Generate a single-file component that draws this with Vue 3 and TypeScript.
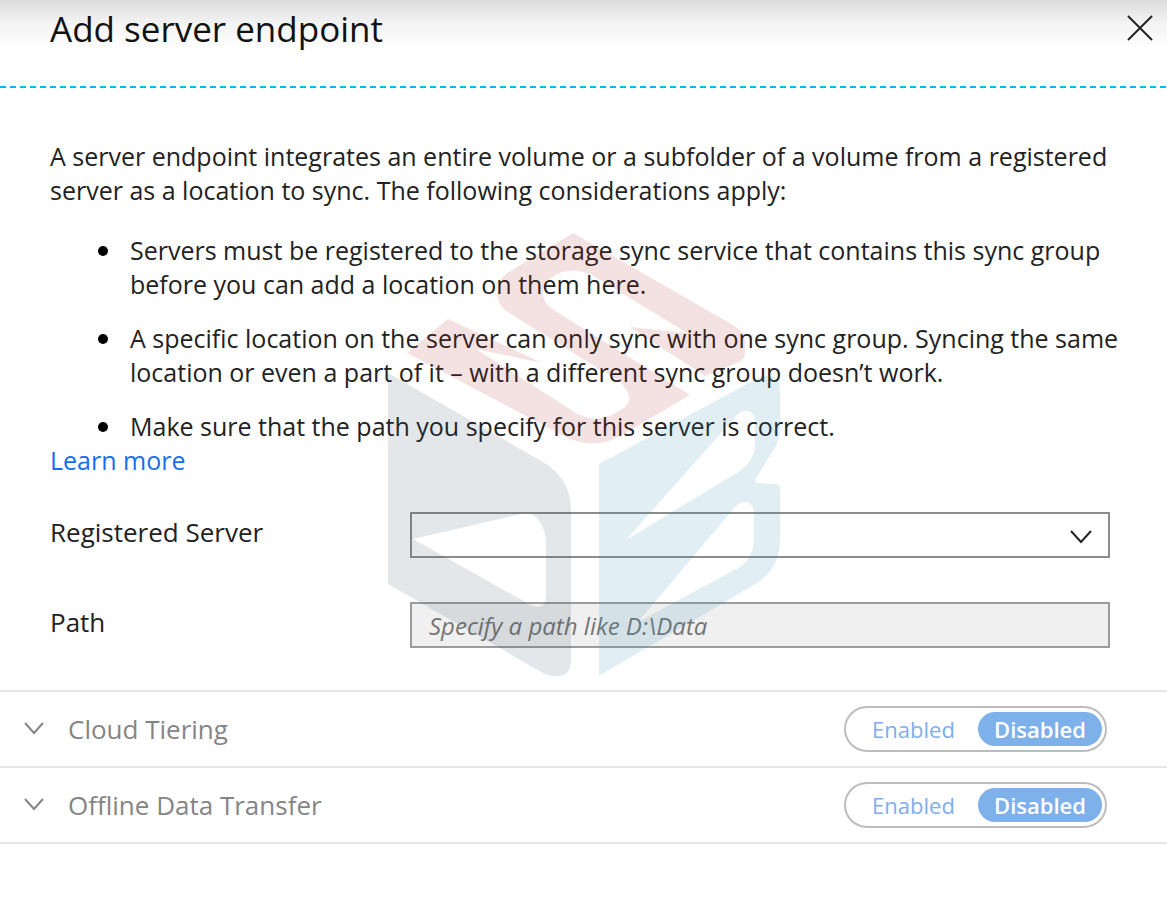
<script setup lang="ts">
import { ref } from 'vue'

const considerations: string[] = [
  'Servers must be registered to the storage sync service that contains this sync group before you can add a location on them here.',
  'A specific location on the server can only sync with one sync group. Syncing the same location or even a part of it – with a different sync group doesn’t work.',
  'Make sure that the path you specify for this server is correct.',
]

const server = ref('')
const path = ref('')
const sections = ref([
  { id: 'tiering', title: 'Cloud Tiering', value: 'Disabled' },
  { id: 'offline', title: 'Offline Data Transfer', value: 'Disabled' },
])
</script>

<template>
  <main class="blade">
    <header class="head">
      <h1>Add server endpoint</h1>
      <button class="close" type="button" aria-label="Close">
        <svg width="26" height="26" viewBox="0 0 26 26" aria-hidden="true">
          <path d="M1 1L25 25M25 1L1 25" />
        </svg>
      </button>
    </header>
    <svg class="divider" width="100%" height="2" aria-hidden="true">
      <line x1="0" y1="1" x2="100%" y2="1" />
    </svg>

    <section class="body">
      <p>
        A server endpoint integrates an entire volume or a subfolder of a volume from a registered
        server as a location to sync. The following considerations apply:
      </p>
      <ul>
        <li v-for="item in considerations" :key="item">{{ item }}</li>
      </ul>
      <a class="learn" href="#">Learn more</a>

      <div class="field">
        <label for="server">Registered Server</label>
        <div class="select">
          <select id="server" v-model="server">
            <option value=""></option>
          </select>
          <svg class="arrow" width="24" height="14" viewBox="0 0 24 14" aria-hidden="true">
            <path d="M2 1L12 12L22 1" />
          </svg>
        </div>
      </div>
      <div class="field">
        <label for="path">Path</label>
        <input id="path" v-model="path" class="path" type="text" placeholder="Specify a path like D:\Data" />
      </div>
    </section>

    <section v-for="s in sections" :key="s.id" class="row">
      <button class="expand" type="button">
        <svg width="22" height="14" viewBox="0 0 22 14" aria-hidden="true">
          <path d="M2 1L11 11L20 1" />
        </svg>
        <span>{{ s.title }}</span>
      </button>
      <div class="toggle" role="radiogroup" :aria-label="s.title">
        <label v-for="o in ['Enabled', 'Disabled']" :key="o" :class="{ on: s.value === o }">
          <input v-model="s.value" type="radio" :name="s.id" :value="o" />{{ o }}
        </label>
      </div>
    </section>

    <svg class="mark" width="394" height="446" viewBox="387 232 394 446" aria-hidden="true">
      <path
        fill="#b22828"
        d="M573 233L733 325Q745 332 745 343V352Q745 359 739 362L705 376L630 327L687 333L597 278Q580 267 562 272Q538 282 544 299Q546 304 552 309L690 395L622 435Q593 452 562 435L407 353L448 319L542 363L476 349L568 408Q590 424 610 416L622 409Q634 402 626 389L620 382L506 311Q497 304 497 292Q498 280 507 273Z"
      />
      <path
        fill="#2f4e5d"
        fill-rule="evenodd"
        d="M388 373L543 462Q571 479 571 510V660Q571 676 557 676Q549 676 543 673L388 584ZM413 539L525 513Q532 512 538 519Q546 529 546 544V596Q546 607 537 607Q532 606 527 603Z"
      />
      <path
        fill="#208cb2"
        fill-rule="evenodd"
        d="M599 464L758 378Q780 370 780 391V428Q780 440 774 449L755 480Q755 483 759 483L776 484Q780 484 780 488V540Q780 568 757 583L599 676ZM626 540L737 415Q742 410 748 411Q755 413 755 421V445Q754 462 738 472ZM638 622L735 507Q740 502 746 502Q754 504 754 513V540Q753 558 740 567Z"
      />
    </svg>
  </main>
</template>

<style>
body {
  margin: 0;
  background: #fff;
}
</style>

<style scoped>
.blade {
  position: relative;
  font-family: 'Open Sans', 'Noto Sans', sans-serif;
  font-size: 25px;
  line-height: 34px;
  color: #222;
}
.head {
  display: flex;
  justify-content: space-between;
  box-sizing: border-box;
  height: 86px;
  padding: 7px 14px 0 50px;
  background: linear-gradient(#dcdcdc, #f4f4f4 24px, #fff 50px);
}
h1 {
  margin: 0;
  font-size: 35px;
  line-height: 44px;
  font-weight: 400;
  color: #111;
}
button {
  border: 0;
  padding: 0;
  background: none;
  font: inherit;
}
.close {
  display: flex;
  align-items: center;
  height: 42px;
}
.close path,
.arrow path,
.expand path {
  fill: none;
  stroke: #222;
  stroke-width: 2;
}
.divider {
  display: block;
}
.divider line {
  stroke: #00bbf0;
  stroke-width: 2;
  stroke-dasharray: 6 4;
}
.body {
  padding: 51px 57px 42px 50px;
}
p {
  margin: 0 0 26px;
}
ul {
  margin: 0 -16px 0 0;
  padding-left: 80px;
  list-style: none;
}
li {
  position: relative;
}
li::before {
  content: '';
  position: absolute;
  left: -32px;
  top: 13px;
  width: 10px;
  height: 10px;
  border-radius: 50%;
  background: #000;
}
li + li {
  margin-top: 20px;
}
.learn {
  display: block;
  width: fit-content;
  color: #1570ef;
  text-decoration: none;
}
.field {
  display: grid;
  grid-template-columns: 360px 1fr;
  margin-top: 35px;
  font-size: 26px;
  line-height: 40px;
}
.field + .field {
  margin-top: 44px;
}
.select {
  position: relative;
}
select,
.path {
  display: block;
  box-sizing: border-box;
  width: 100%;
  height: 46px;
  border: 2px solid #8c8c8c;
  border-radius: 0;
  background: #fff;
  appearance: none;
  font: inherit;
}
.path {
  padding: 0 17px;
  border-color: #9c9c9c;
  background: #f0f0f0;
  font-size: 24px;
}
.path::placeholder {
  color: #757575;
  font-style: italic;
  opacity: 1;
}
.arrow {
  position: absolute;
  right: 17px;
  top: 18px;
  pointer-events: none;
}
.row {
  display: flex;
  align-items: center;
  justify-content: space-between;
  padding: 14px 60px 14px 23px;
  border-top: 2px solid #e6e6e6;
}
.row:last-of-type {
  border-bottom: 2px solid #e6e6e6;
}
.expand {
  display: flex;
  align-items: center;
  gap: 23px;
  font-size: 26px;
  color: #858585;
}
.expand path {
  stroke: #858585;
}
.toggle {
  display: flex;
  box-sizing: border-box;
  width: 263px;
  height: 46px;
  padding: 4px 3px;
  border: 2px solid #bdbdbd;
  border-radius: 23px;
  font-size: 22px;
  color: #7eaeed;
}
.toggle label {
  flex: 1;
  border-radius: 17px;
  text-align: center;
}
.toggle .on {
  flex: 0 0 124px;
  background: #7eb0ea;
  color: #fff;
  font-weight: 600;
}
.toggle input {
  position: absolute;
  appearance: none;
  margin: 0;
}
.mark {
  position: absolute;
  top: 232px;
  left: 50%;
  margin-left: -197px;
  opacity: 0.13;
  pointer-events: none;
}
</style>
